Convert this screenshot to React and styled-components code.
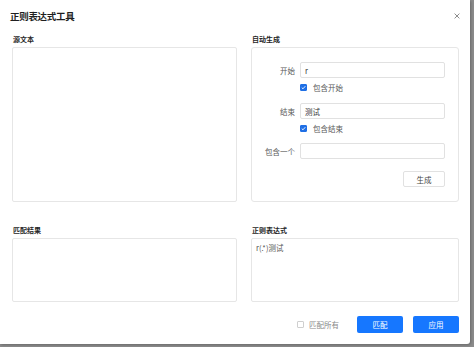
import React from 'react'
import styled, { createGlobalStyle } from 'styled-components'

const GlobalStyle = createGlobalStyle`
    html, body {
        margin:0;
        padding:0;
        background:#8c8c8c;
    }
    body{
        font-family: "Noto Sans CJK SC", "Noto Sans", sans-serif;
    }
`;

const Backdrop = styled.div`
    width:474px;
    height:347px;
    background:#8c8c8c;
    overflow:hidden;
`;

const Dialog = styled.div`
    width:470px;
    height:344px;
    background:#fff;
    border-radius:0 0 3px 0;
    box-shadow: 1px 1px 3px rgba(0,0,0,0.25);
    box-sizing:border-box;
    padding:0 11px 0 12px;
    display:flex;
    flex-direction:column;
`;

const Header = styled.div`
    height:34px;
    display:flex;
    justify-content:space-between;
    align-items:flex-start;
    padding-top:10px;
    box-sizing:border-box;
    margin-left:-2px;
    h1{
        margin:0;
        font-size:9.5px;
        line-height:12px;
        font-weight:bold;
        color:#1f1f1f;
        letter-spacing:-0.3px;
    }
`;

const CloseBtn = styled.button`
    border:none;
    background:none;
    padding:0;
    margin:1px -3px 0 0;
    width:10px;
    height:10px;
    display:flex;
    align-items:center;
    justify-content:center;
    cursor:pointer;
`;

const Grid = styled.div`
    display:grid;
    grid-template-columns:225px 1fr;
    column-gap:14px;
    row-gap:0;
`;

const Section = styled.div`
    display:flex;
    flex-direction:column;
    margin-top:${p => p.$top || 0}px;
`;

const SectionLabel = styled.div`
    font-size:7px;
    line-height:10px;
    font-weight:bold;
    color:#262626;
    margin-bottom:3px;
    margin-left:1px;
`;

const TextBox = styled.div`
    height:${p => p.$h}px;
    border:1px solid #e6e6e6;
    border-radius:2px;
    box-sizing:border-box;
    padding:4px 4px;
    font-size:7.5px;
    line-height:10px;
    color:#555;
`;

const GenBox = styled.div`
    height:155px;
    border:1px solid #e6e6e6;
    border-radius:3px;
    box-sizing:border-box;
    padding:14px 13px 0 0;
    display:flex;
    flex-direction:column;
`;

const FieldRow = styled.div`
    display:flex;
    align-items:center;
    gap:5px;
    margin-top:${p => p.$top || 0}px;
    label{
        width:43px;
        text-align:right;
        font-size:7.5px;
        color:#595959;
    }
`;

const Input = styled.div`
    flex:1;
    height:16px;
    border:1px solid #e1e1e1;
    border-radius:2px;
    box-sizing:border-box;
    padding:0 4px;
    display:flex;
    align-items:center;
    font-size:7.5px;
    color:#333;
`;

const CheckRow = styled.div`
    display:flex;
    align-items:center;
    gap:6px;
    height:10px;
    margin-top:4px;
    margin-left:${p => p.$left || 0}px;
    font-size:7.5px;
    color:#595959;
`;

const Box = styled.span`
    width:7px;
    height:7px;
    border-radius:1px;
    box-sizing:border-box;
    display:inline-flex;
    align-items:center;
    justify-content:center;
    background:${p => p.$on ? '#1f6fe5' : '#fff'};
    border:1px solid ${p => p.$on ? '#1f6fe5' : '#cfcfcf'};
`;

const GenButton = styled.button`
    align-self:flex-end;
    margin-top:12px;
    width:42px;
    height:16px;
    border:1px solid #e1e1e1;
    border-radius:2px;
    background:#fff;
    font-family:inherit;
    font-size:7.5px;
    color:#444;
    padding:0;
`;

const Footer = styled.div`
    display:flex;
    justify-content:flex-end;
    align-items:center;
    margin-top:14px;
    gap:10px;
`;

const FooterCheck = styled(CheckRow)`
    margin-top:0;
    margin-right:8px;
    gap:5px;
    color:#8a8a8a;
`;

const PrimaryButton = styled.button`
    width:46px;
    height:17px;
    border:none;
    border-radius:2px;
    background:#1677ff;
    color:#fff;
    font-family:inherit;
    font-size:7.5px;
    padding:0;
`;

const Check = ({ on }) => (
    <Box $on={on}>
        {on && (
            <svg width="5" height="5" viewBox="0 0 10 10">
                <path d="M1.5 5.2 L4 7.6 L8.6 2.4" fill="none" stroke="#fff" strokeWidth="1.8" />
            </svg>
        )}
    </Box>
)

const App = () => {
    return (
        <Backdrop>
            <GlobalStyle />
            <Dialog>
                <Header>
                    <h1>正则表达式工具</h1>
                    <CloseBtn>
                        <svg width="6" height="6" viewBox="0 0 10 10">
                            <path d="M1 1 L9 9 M9 1 L1 9" stroke="#777" strokeWidth="1.4" />
                        </svg>
                    </CloseBtn>
                </Header>
                <Grid>
                    <Section>
                        <SectionLabel>源文本</SectionLabel>
                        <TextBox $h={155} />
                    </Section>
                    <Section>
                        <SectionLabel>自动生成</SectionLabel>
                        <GenBox>
                            <FieldRow>
                                <label>开始</label>
                                <Input>r</Input>
                            </FieldRow>
                            <CheckRow $left={48}><Check on />包含开始</CheckRow>
                            <FieldRow $top={11}>
                                <label>结束</label>
                                <Input>测试</Input>
                            </FieldRow>
                            <CheckRow $left={48}><Check on />包含结束</CheckRow>
                            <FieldRow $top={10}>
                                <label>包含一个</label>
                                <Input />
                            </FieldRow>
                            <GenButton>生成</GenButton>
                        </GenBox>
                    </Section>
                    <Section $top={23}>
                        <SectionLabel>匹配结果</SectionLabel>
                        <TextBox $h={64} />
                    </Section>
                    <Section $top={23}>
                        <SectionLabel>正则表达式</SectionLabel>
                        <TextBox $h={64}>r(.*)测试</TextBox>
                    </Section>
                </Grid>
                <Footer>
                    <FooterCheck><Check />匹配所有</FooterCheck>
                    <PrimaryButton>匹配</PrimaryButton>
                    <PrimaryButton>应用</PrimaryButton>
                </Footer>
            </Dialog>
        </Backdrop>
    )
}

export default App
